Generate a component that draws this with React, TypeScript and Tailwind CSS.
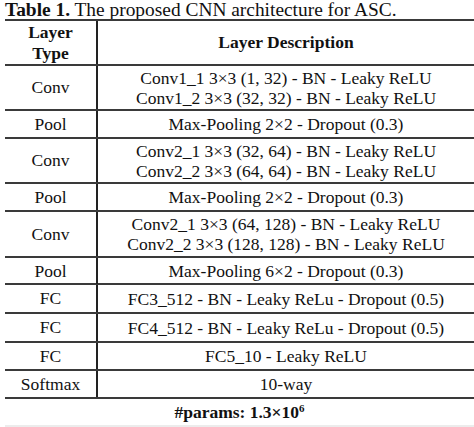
const ROWS: { type: string; desc: string[]; h: string }[] = [
  { type: 'Conv', desc: ['Conv1_1 3×3 (1, 32) - BN - Leaky ReLU', 'Conv1_2 3×3 (32, 32) - BN - Leaky ReLU'], h: 'h-[45px]' },
  { type: 'Pool', desc: ['Max-Pooling 2×2 - Dropout (0.3)'], h: 'h-[28px]' },
  { type: 'Conv', desc: ['Conv2_1 3×3 (32, 64) - BN - Leaky ReLU', 'Conv2_2 3×3 (64, 64) - BN - Leaky ReLU'], h: 'h-[45px]' },
  { type: 'Pool', desc: ['Max-Pooling 2×2 - Dropout (0.3)'], h: 'h-[28px]' },
  { type: 'Conv', desc: ['Conv2_1 3×3 (64, 128) - BN - Leaky ReLU', 'Conv2_2 3×3 (128, 128) - BN - Leaky ReLU'], h: 'h-[46px]' },
  { type: 'Pool', desc: ['Max-Pooling 6×2 - Dropout (0.3)'], h: 'h-[27px]' },
  { type: 'FC', desc: ['FC3_512 - BN - Leaky ReLu - Dropout (0.5)'], h: 'h-[29px]' },
  { type: 'FC', desc: ['FC4_512 - BN - Leaky ReLu - Dropout (0.5)'], h: 'h-[29px]' },
  { type: 'FC', desc: ['FC5_10 - Leaky ReLU'], h: 'h-[28px]' },
  { type: 'Softmax', desc: ['10-way'], h: 'h-[28px]' },
];

export default function App() {
  return (
    <div className="w-[474px] h-[427px] bg-white text-[#111] overflow-hidden flex flex-col font-['Liberation_Serif','Times_New_Roman',serif]">
      {/* caption */}
      <div className="h-[19px] pl-[5px] text-[19.4px] leading-[20px] whitespace-nowrap">
        <span className="font-bold">Table 1.</span> The proposed CNN architecture for ASC.
      </div>

      <div className="ml-[5px] border-t-2 border-[#3a3a3a] flex flex-col">
        {/* header */}
        <div className="grid grid-cols-[93px_1fr] h-[45px] border-b-2 border-[#3a3a3a] font-bold text-[17.5px]">
          <div className="border-r-2 border-[#222] flex flex-col items-center justify-center leading-[21px]">
            <span>Layer</span>
            <span>Type</span>
          </div>
          <div className="flex items-center justify-center">Layer Description</div>
        </div>

        {ROWS.map((r, i) => (
          <div
            key={i}
            className={`grid grid-cols-[93px_1fr] ${r.h} border-b-2 border-[#3a3a3a] text-[17.5px]`}
          >
            <div className="border-r-2 border-[#222] flex items-center justify-center">{r.type}</div>
            <div className="flex flex-col items-center justify-center leading-[20px] whitespace-nowrap">
              {r.desc.map((d) => (
                <span key={d}>{d}</span>
              ))}
            </div>
          </div>
        ))}

        {/* params */}
        <div className="h-[26px] flex items-center justify-center font-bold text-[17.5px]">
          <span>
            #params: 1.3×10<sup className="text-[11px]">6</sup>
          </span>
        </div>
      </div>
      <div className="h-[3px] ml-[5px] bg-[#ececec]" />
    </div>
  );
}
